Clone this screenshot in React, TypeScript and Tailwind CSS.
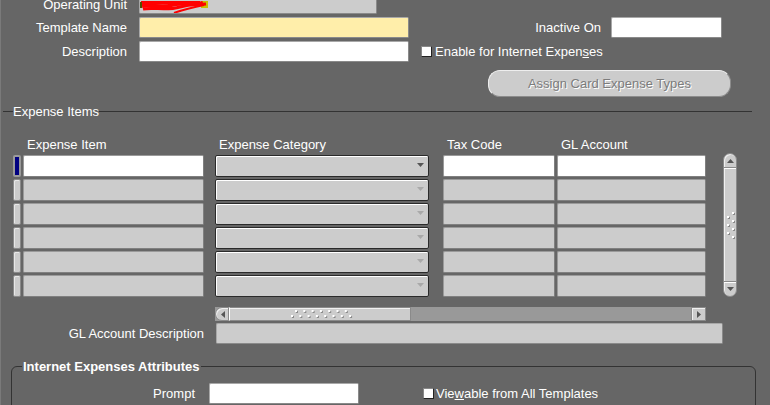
import React from "react";

const font = "font-['Liberation_Sans',Arial,sans-serif]";

const rows = [0, 1, 2, 3, 4, 5];

function Checkbox() {
  return (
    <div className="w-[11px] h-[11px] shrink-0 bg-white border border-[#888] border-r-[#222] border-b-[#222]" />
  );
}

function Arrow({ dir, color }: { dir: "up" | "down" | "left" | "right"; color: string }) {
  const pts = {
    up: "0,4 7,4 3.5,0",
    down: "0,0 7,0 3.5,4",
    left: "4,0 4,7 0,3.5",
    right: "0,0 0,7 4,3.5",
  }[dir];
  const vertical = dir === "up" || dir === "down";
  return (
    <svg width={vertical ? 7 : 4} height={vertical ? 4 : 7} className="block">
      <polygon points={pts} fill={color} />
    </svg>
  );
}

function VGrip() {
  const dots = [
    [5, 0],
    [0, 4],
    [5, 8],
    [0, 12],
    [5, 16],
    [0, 20],
    [5, 24],
  ];
  return (
    <svg width="8" height="27" className="block">
      {dots.map(([x, y], i) => (
        <g key={i}>
          <rect x={x + 1} y={y + 1} width="2" height="2" fill="#8a8a8a" />
          <rect x={x} y={y} width="2" height="2" fill="#ffffff" />
        </g>
      ))}
    </svg>
  );
}

function HGrip() {
  const dots: number[][] = [];
  for (let i = 0; i < 7; i++) dots.push([4 + i * 8.3, 0]);
  for (let i = 0; i < 8; i++) dots.push([i * 8.3, 5]);
  return (
    <svg width="64" height="8" className="block">
      {dots.map(([x, y], i) => (
        <g key={i}>
          <rect x={x + 1} y={y + 1} width="2" height="2" fill="#8a8a8a" />
          <rect x={x} y={y} width="2" height="2" fill="#ffffff" />
        </g>
      ))}
    </svg>
  );
}

// red redaction scribble over the Operating Unit value
function Scribble() {
  return (
    <svg width="72" height="14" className="absolute left-0 top-[7px]">
      <rect x="61" y="0" width="7" height="7" fill="#c8c000" />
      <path d="M1 2 L60 1" stroke="#ff0000" strokeWidth="4" fill="none" />
      <path d="M2 5 C12 3, 22 8, 32 4 S50 6, 63 2" stroke="#ff0000" strokeWidth="4" fill="none" />
      <path d="M3 8 C14 6, 26 10, 40 6 S56 4, 66 3" stroke="#ff0000" strokeWidth="3" fill="none" />
      <path d="M34 12 C42 9, 54 6, 64 4" stroke="#ff0000" strokeWidth="2" fill="none" />
      <path d="M1 1 L1 7" stroke="#505000" strokeWidth="2" fill="none" />
    </svg>
  );
}

const field = "h-[21px] rounded-[2px] border border-[#a8a8a8] border-b-[#8a8a8a] border-r-[#8a8a8a]";
const cell = "h-[22px] rounded-[2px] border border-[#9a9a9a] border-b-[#808080] border-r-[#808080]";

export default function App() {
  return (
    <div
      className={`${font} w-[770px] h-[405px] overflow-hidden bg-[#666666] text-white text-[13px] leading-[15px] border-l border-[#7a7a7a] flex flex-col`}
    >
      {/* Header form */}
      <div className="flex items-center mt-[-7px]">
        <div className="w-[126px] text-right pt-[2px]">Operating Unit</div>
        <div className={`${field} relative ml-[12px] w-[238px] bg-[#cccccc] overflow-hidden`}>
          <Scribble />
        </div>
      </div>

      <div className="flex items-center mt-[3px]">
        <div className="w-[126px] text-right">Template Name</div>
        <div className={`${field} ml-[12px] w-[270px] bg-[#ffeeaa]`} />
        <div className="w-[192px] text-right">Inactive On</div>
        <div className={`${field} ml-[10px] w-[111px] bg-white`} />
      </div>

      <div className="flex items-center mt-[3px]">
        <div className="w-[126px] text-right">Description</div>
        <div className={`${field} ml-[12px] w-[270px] bg-white`} />
        <div className="ml-[12px]">
          <Checkbox />
        </div>
        <div className="ml-[3px]">
          Enable for Internet Expen<span className="underline">s</span>es
        </div>
      </div>

      <div className="flex mt-[8px]">
        <button className="ml-[487px] w-[243px] h-[27px] rounded-[12px] bg-[#cccccc] border border-[#eeeeee] border-b-[#8c8c8c] border-r-[#8c8c8c] text-[#7c7c7c] [text-shadow:1px_1px_0_#ffffff]">
          Assign Card Expense Types
        </button>
      </div>

      {/* Expense Items separator */}
      <div className="flex items-center h-[15px] mt-[7px]">
        <div className="ml-[2px] w-[10px] h-px bg-[#333333]" />
        <div>Expense Items</div>
        <div className="w-[653px] h-px bg-[#333333]" />
      </div>

      {/* Column headers */}
      <div className="flex mt-[18px] h-[15px]">
        <div className="ml-[22px] w-[192px] pl-[4px]">Expense Item</div>
        <div className="w-[228px] pl-[4px]">Expense Category</div>
        <div className="w-[114px] pl-[4px]">Tax Code</div>
        <div className="w-[149px] pl-[4px]">GL Account</div>
      </div>

      {/* Multi-row block */}
      <div className="flex mt-[1px] h-[144px]">
        <div className="flex flex-col gap-[2px] mt-[2px] ml-[12px]">
          {rows.map((r) => (
            <div key={r} className="flex">
              <div
                className={`w-[8px] h-[22px] rounded-[2px] border border-[#8a8a8a] ${
                  r === 0 ? "bg-[#000080] border-[#9a9a9a] border-2" : "bg-[#cccccc] shadow-[inset_1px_1px_0_#e8e8e8]"
                }`}
              />
              <div className={`${cell} ml-[2px] w-[181px] ${r === 0 ? "bg-white" : "bg-[#cccccc]"}`} />
              <div className="ml-[11px] w-[214px] h-[22px] rounded-[2px] border border-[#2a2a2a] bg-[#cccccc] shadow-[inset_1px_1px_0_#ffffff] flex items-center justify-end pr-[4px] pb-[3px]">
                <Arrow dir="down" color={r === 0 ? "#555555" : "#a9a9a9"} />
              </div>
              <div className={`${cell} ml-[14px] w-[112px] ${r === 0 ? "bg-white" : "bg-[#cccccc]"}`} />
              <div className={`${cell} ml-[2px] w-[149px] ${r === 0 ? "bg-white" : "bg-[#cccccc]"}`} />
            </div>
          ))}
        </div>

        {/* Vertical scrollbar */}
        <div className="ml-[17px] w-[14px] h-[144px] rounded-[7px] border border-[#8a8a8a] bg-[#cccccc] shadow-[inset_1px_1px_0_#f0f0f0] flex flex-col">
          <div className="h-[14px] flex items-center justify-center border-b border-[#8a8a8a] pt-[1px]">
            <Arrow dir="up" color="#555555" />
          </div>
          <div className="flex-1 flex items-center justify-center border-t border-white border-b border-b-[#8a8a8a] pl-[1px]">
            <VGrip />
          </div>
          <div className="h-[14px] flex items-center justify-center border-t border-white pb-[2px]">
            <Arrow dir="down" color="#555555" />
          </div>
        </div>
      </div>

      {/* Horizontal scrollbar */}
      <div className="flex mt-[10px] ml-[214px] w-[491px] h-[14px] bg-[#999999]">
        <div className="w-[14px] h-[14px] rounded-l-[7px] border border-[#8a8a8a] bg-[#cccccc] shadow-[inset_1px_1px_0_#f0f0f0] flex items-center justify-center pl-[1px]">
          <Arrow dir="left" color="#555555" />
        </div>
        <div className="w-[182px] h-[14px] border border-[#8a8a8a] border-l-white bg-[#cccccc] shadow-[inset_0_1px_0_#f0f0f0] flex items-center justify-center pl-[6px]">
          <HGrip />
        </div>
        <div className="flex-1" />
        <div className="w-[15px] h-[14px] border border-[#8a8a8a] bg-[#cccccc] shadow-[inset_1px_1px_0_#f0f0f0] flex items-center justify-center">
          <Arrow dir="right" color="#555555" />
        </div>
      </div>

      {/* GL Account Description */}
      <div className="flex items-center mt-[2px]">
        <div className="w-[203px] text-right">GL Account Description</div>
        <div className={`${field} ml-[12px] w-[507px] bg-[#cccccc]`} />
      </div>

      {/* Internet Expenses Attributes */}
      <fieldset className="mt-[15px] ml-[10px] w-[745px] h-[80px] border border-[#333333] rounded-[6px] shrink-0">
        <legend className="ml-[10px] px-[1px] font-bold">Internet Expenses Attributes</legend>
        <div className="flex items-center mt-[9px]">
          <div className="w-[183px] text-right">Prompt</div>
          <div className={`${field} ml-[14px] w-[150px] bg-white`} />
          <div className="ml-[64px]">
            <Checkbox />
          </div>
          <div className="ml-[2px]">
            Vie<span className="underline">w</span>able from All Templates
          </div>
        </div>
      </fieldset>
    </div>
  );
}
